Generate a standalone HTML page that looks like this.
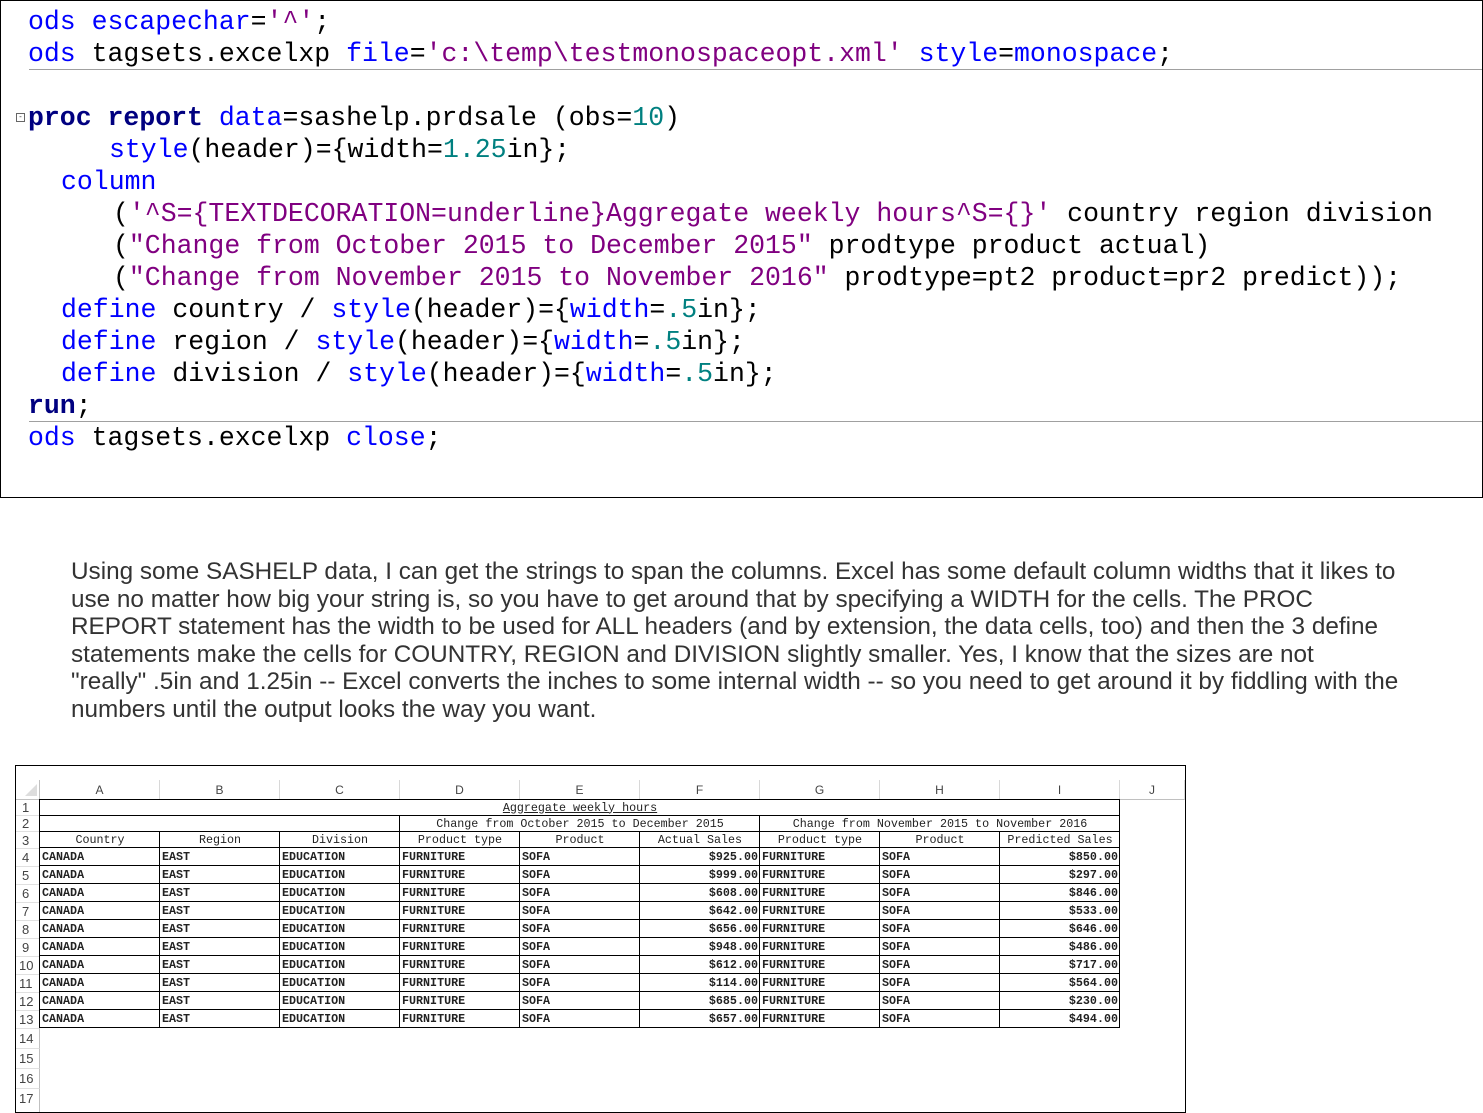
<!DOCTYPE html>
<html><head><meta charset="utf-8"><style>
*{margin:0;padding:0;box-sizing:border-box}
body{width:1483px;height:1113px;background:#fff;position:relative;overflow:hidden;font-family:"Liberation Sans",sans-serif}
.code{position:absolute;left:0;top:0;width:1483px;height:498px;border:1px solid #000}
.l{position:absolute;font-family:"Liberation Mono",monospace;font-size:26.5px;line-height:32px;white-space:pre;color:#000}
.k{color:#0000ff}.s{color:#800080}.n{color:#008080}.b{color:#000080;font-weight:bold}
.sep{position:absolute;left:28px;right:0;height:1px;background:#a0a0a0}
.p{position:absolute;left:71px;top:558px;font-size:24.3px;line-height:27.6px;color:#333;white-space:pre}
.xl{position:absolute;left:15px;top:765px;width:1171px;height:348px;border:1px solid #000;background:#fff}
.ch{position:absolute;top:14px;height:20px;font-size:12px;color:#444;text-align:center;line-height:20px;border-right:1px solid #d8d8d8;border-bottom:1px solid #c0c0c0}
.rh{position:absolute;left:0;width:24px;font-size:13px;color:#444;padding-left:6px;border-bottom:1px solid #e0e0e0;border-right:1px solid #c0c0c0}
table{position:absolute;left:23px;top:33px;border-collapse:collapse;font-family:"Liberation Mono",monospace;font-size:11.7px;table-layout:fixed}
td{border:1px solid #000;height:18px;padding:0 1px 0 2px;white-space:nowrap;overflow:hidden;line-height:16px;font-weight:bold;color:#222}
td.h{font-weight:normal;text-align:center;height:16px;line-height:14px}
td.r{text-align:right}
</style></head><body>
<div class="code">
<div class="l" style="left:27px;top:5px"><span class="k">ods escapechar</span>=<span class="s">'^'</span>;</div>
<div class="l" style="left:27px;top:37px"><span class="k">ods </span>tagsets.excelxp <span class="k">file</span>=<span class="s">'c:\temp\testmonospaceopt.xml'</span> <span class="k">style</span>=<span class="k">monospace</span>;</div>
<div class="sep" style="top:68px"></div>
<div style="position:absolute;left:15px;top:112px;width:9px;height:9px;border:1px solid #666;font-size:8px;line-height:6px;text-align:center;color:#333">-</div>
<div class="l" style="left:27px;top:101px"><span class="b">proc report</span> <span class="k">data</span>=sashelp.prdsale (obs=<span class="n">10</span>)</div>
<div class="l" style="left:108px;top:133px"><span class="k">style</span>(header)={width=<span class="n">1.25</span>in};</div>
<div class="l" style="left:60px;top:165px"><span class="k">column</span></div>
<div class="l" style="left:112px;top:197px">(<span class="s">'^S={TEXTDECORATION=underline}Aggregate weekly hours^S={}'</span> country region division</div>
<div class="l" style="left:112px;top:229px">(<span class="s">"Change from October 2015 to December 2015"</span> prodtype product actual)</div>
<div class="l" style="left:112px;top:261px">(<span class="s">"Change from November 2015 to November 2016"</span> prodtype=pt2 product=pr2 predict));</div>
<div class="l" style="left:60px;top:293px"><span class="k">define</span> country / <span class="k">style</span>(header)={<span class="k">width</span>=<span class="n">.5</span>in};</div>
<div class="l" style="left:60px;top:325px"><span class="k">define</span> region / <span class="k">style</span>(header)={<span class="k">width</span>=<span class="n">.5</span>in};</div>
<div class="l" style="left:60px;top:357px"><span class="k">define</span> division / <span class="k">style</span>(header)={<span class="k">width</span>=<span class="n">.5</span>in};</div>
<div class="l" style="left:27px;top:389px"><span class="b">run</span>;</div>
<div class="sep" style="top:420px"></div>
<div class="l" style="left:27px;top:421px"><span class="k">ods </span>tagsets.excelxp <span class="k">close</span>;</div>
</div>
<div class="p">Using some SASHELP data, I can get the strings to span the columns. Excel has some default column widths that it likes to
use no matter how big your string is, so you have to get around that by specifying a WIDTH for the cells. The PROC
REPORT statement has the width to be used for ALL headers (and by extension, the data cells, too) and then the 3 define
statements make the cells for COUNTRY, REGION and DIVISION slightly smaller. Yes, I know that the sizes are not
"really" .5in and 1.25in -- Excel converts the inches to some internal width -- so you need to get around it by fiddling with the
numbers until the output looks the way you want.</div>
<div style="position:absolute;left:232px;top:767px;width:954px;height:1px;background:#bbb"></div>
<div class="xl">
<div style="position:absolute;left:0;top:14px;width:24px;height:20px;border-right:1px solid #c0c0c0;border-bottom:1px solid #c0c0c0"></div>
<div style="position:absolute;left:9px;top:18px;width:0;height:0;border-left:12px solid transparent;border-bottom:12px solid #ddd"></div>
<div class="ch" style="left:24px;width:120px">A</div>
<div class="ch" style="left:144px;width:120px">B</div>
<div class="ch" style="left:264px;width:120px">C</div>
<div class="ch" style="left:384px;width:120px">D</div>
<div class="ch" style="left:504px;width:120px">E</div>
<div class="ch" style="left:624px;width:120px">F</div>
<div class="ch" style="left:744px;width:120px">G</div>
<div class="ch" style="left:864px;width:120px">H</div>
<div class="ch" style="left:984px;width:120px">I</div>
<div class="ch" style="left:1104px;width:65px">J</div>
<div class="rh" style="top:34px;height:16px;line-height:16px">1</div>
<div class="rh" style="top:50px;height:16px;line-height:16px">2</div>
<div class="rh" style="top:66px;height:17px;line-height:17px">3</div>
<div class="rh" style="top:83px;height:18px;line-height:18px">4</div>
<div class="rh" style="top:101px;height:18px;line-height:18px">5</div>
<div class="rh" style="top:119px;height:18px;line-height:18px">6</div>
<div class="rh" style="top:137px;height:18px;line-height:18px">7</div>
<div class="rh" style="top:155px;height:18px;line-height:18px">8</div>
<div class="rh" style="top:173px;height:18px;line-height:18px">9</div>
<div class="rh" style="top:191px;height:18px;line-height:18px;padding-left:3px">10</div>
<div class="rh" style="top:209px;height:18px;line-height:18px;padding-left:3px">11</div>
<div class="rh" style="top:227px;height:18px;line-height:18px;padding-left:3px">12</div>
<div class="rh" style="top:245px;height:18px;line-height:18px;padding-left:3px">13</div>
<div class="rh" style="top:263px;height:20px;line-height:20px;padding-left:3px">14</div>
<div class="rh" style="top:283px;height:20px;line-height:20px;padding-left:3px">15</div>
<div class="rh" style="top:303px;height:20px;line-height:20px;padding-left:3px">16</div>
<div class="rh" style="top:323px;height:23px;line-height:20px;padding-left:3px;border-bottom:none">17</div>
<table>
<colgroup><col style="width:120px"><col style="width:120px"><col style="width:120px"><col style="width:120px"><col style="width:120px"><col style="width:120px"><col style="width:120px"><col style="width:120px"><col style="width:120px"></colgroup>
<tr><td class="h" colspan="9"><u>Aggregate weekly hours</u></td></tr>
<tr><td class="h" colspan="3"></td><td class="h" colspan="3">Change from October 2015 to December 2015</td><td class="h" colspan="3">Change from November 2015 to November 2016</td></tr>
<tr><td class="h">Country</td><td class="h">Region</td><td class="h">Division</td><td class="h">Product type</td><td class="h">Product</td><td class="h">Actual Sales</td><td class="h">Product type</td><td class="h">Product</td><td class="h">Predicted Sales</td></tr>
<tr><td>CANADA</td><td>EAST</td><td>EDUCATION</td><td>FURNITURE</td><td>SOFA</td><td class="r">$925.00</td><td>FURNITURE</td><td>SOFA</td><td class="r">$850.00</td></tr>
<tr><td>CANADA</td><td>EAST</td><td>EDUCATION</td><td>FURNITURE</td><td>SOFA</td><td class="r">$999.00</td><td>FURNITURE</td><td>SOFA</td><td class="r">$297.00</td></tr>
<tr><td>CANADA</td><td>EAST</td><td>EDUCATION</td><td>FURNITURE</td><td>SOFA</td><td class="r">$608.00</td><td>FURNITURE</td><td>SOFA</td><td class="r">$846.00</td></tr>
<tr><td>CANADA</td><td>EAST</td><td>EDUCATION</td><td>FURNITURE</td><td>SOFA</td><td class="r">$642.00</td><td>FURNITURE</td><td>SOFA</td><td class="r">$533.00</td></tr>
<tr><td>CANADA</td><td>EAST</td><td>EDUCATION</td><td>FURNITURE</td><td>SOFA</td><td class="r">$656.00</td><td>FURNITURE</td><td>SOFA</td><td class="r">$646.00</td></tr>
<tr><td>CANADA</td><td>EAST</td><td>EDUCATION</td><td>FURNITURE</td><td>SOFA</td><td class="r">$948.00</td><td>FURNITURE</td><td>SOFA</td><td class="r">$486.00</td></tr>
<tr><td>CANADA</td><td>EAST</td><td>EDUCATION</td><td>FURNITURE</td><td>SOFA</td><td class="r">$612.00</td><td>FURNITURE</td><td>SOFA</td><td class="r">$717.00</td></tr>
<tr><td>CANADA</td><td>EAST</td><td>EDUCATION</td><td>FURNITURE</td><td>SOFA</td><td class="r">$114.00</td><td>FURNITURE</td><td>SOFA</td><td class="r">$564.00</td></tr>
<tr><td>CANADA</td><td>EAST</td><td>EDUCATION</td><td>FURNITURE</td><td>SOFA</td><td class="r">$685.00</td><td>FURNITURE</td><td>SOFA</td><td class="r">$230.00</td></tr>
<tr><td>CANADA</td><td>EAST</td><td>EDUCATION</td><td>FURNITURE</td><td>SOFA</td><td class="r">$657.00</td><td>FURNITURE</td><td>SOFA</td><td class="r">$494.00</td></tr>
</table>
</div>
</body></html>
